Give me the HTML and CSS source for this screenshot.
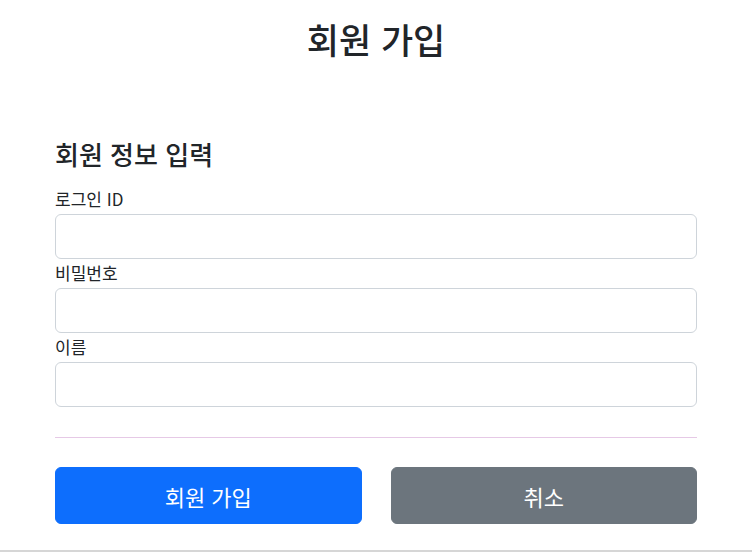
FILE: index.html
```html
<!DOCTYPE html>
<html lang="ko">
<head>
    <meta charset="UTF-8">
    <meta name="viewport" content="width=device-width, initial-scale=1.0">
    <title>회원 가입</title>
    <link rel="stylesheet" href="styles.css">
</head>
<body>
    <div class="container">
        <div class="page-header">
            <h2>회원 가입</h2>
        </div>
        <form class="join-form" action="" method="post">
            <h4 class="section-title">회원 정보 입력</h4>
            <div class="field">
                <label for="loginId">로그인 ID</label>
                <input type="text" id="loginId" name="loginId" class="form-control">
            </div>
            <div class="field">
                <label for="password">비밀번호</label>
                <input type="password" id="password" name="password" class="form-control">
            </div>
            <div class="field">
                <label for="name">이름</label>
                <input type="text" id="name" name="name" class="form-control">
            </div>
            <hr class="divider">
            <div class="button-row">
                <button type="submit" class="btn btn-primary">회원 가입</button>
                <button type="button" class="btn btn-secondary" onclick="location.href='/'">취소</button>
            </div>
        </form>
    </div>
    <div class="page-bottom"></div>
</body>
</html>
```

FILE: styles.css
```css
body {
    margin: 0;
    font-family: "Noto Sans CJK KR", "Noto Sans", sans-serif;
    color: #212529;
    background-color: #fff;
}
.container {
    width: 642px;
    margin: 0 auto;
    padding: 0 0 26px 0;
}
.page-header {
    text-align: center;
    padding-top: 18px;
    height: 138px;
    box-sizing: border-box;
}
.page-header h2 {
    margin: 0;
    font-size: 35px;
    font-weight: 500;
    line-height: 1.2;
}
.section-title {
    margin: 0 0 18px 0;
    font-size: 26px;
    font-weight: 500;
    line-height: 1.2;
}
.field label {
    display: block;
    font-size: 17px;
    line-height: 24px;
    margin: 2px 0 3px 0;
}
.form-control {
    display: block;
    width: 100%;
    height: 45px;
    box-sizing: border-box;
    padding: 6px 12px;
    font-size: 16px;
    font-family: inherit;
    border: 1px solid #ced4da;
    border-radius: 6px;
    background-color: #fff;
}
.divider {
    margin: 30px 0 29px 0;
    border: 0;
    border-top: 1px solid #e6c9e6;
}
.button-row {
    display: grid;
    grid-template-columns: 1fr 1fr;
    gap: 29px;
}
.btn {
    height: 57px;
    font-size: 22px;
    font-family: inherit;
    color: #fff;
    border: 1px solid transparent;
    border-radius: 6px;
    cursor: pointer;
}
.btn-primary {
    background-color: #0d6efd;
    border-color: #0d6efd;
}
.btn-secondary {
    background-color: #6c757d;
    border-color: #6c757d;
}
.page-bottom {
    border-top: 2px solid #d6d6d6;
}
```
